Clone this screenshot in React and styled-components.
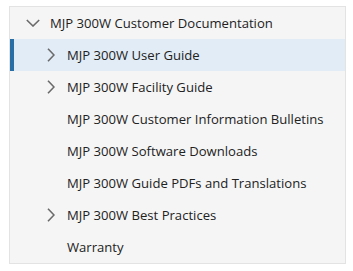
import React from "react";
import styled, { createGlobalStyle } from "styled-components";

const Global = createGlobalStyle`
  html, body { margin: 0; padding: 0; background: #fff; }
  body { font-family: "Open Sans", "Noto Sans", sans-serif; }
`;

const Page = styled.div`
  padding: 6px 7px 0 9px;
`;

const Panel = styled.ul`
  list-style: none;
  margin: 0;
  padding: 0;
  width: 335px;
  background: #f5f5f5;
  border: 1px solid #e3e3e3;
`;

const Row = styled.li`
  position: relative;
  display: flex;
  align-items: center;
  height: 32px;
  padding-left: ${(p) => p.$indent}px;
  background: ${(p) => (p.$active ? "#e1ecf6" : "transparent")};
  font-size: 13.1px;
  color: #222;
  white-space: nowrap;
  &::before {
    content: "";
    display: ${(p) => (p.$active ? "block" : "none")};
    position: absolute;
    left: 0;
    top: 0;
    bottom: 0;
    width: 4px;
    background: #2a6ea6;
  }
`;

const IconSlot = styled.span`
  display: flex;
  align-items: center;
  justify-content: flex-start;
  width: ${(p) => p.$w}px;
  flex: none;
`;

const Label = styled.span`
  line-height: 20px;
`;

const Down = () => (
  <svg width="14" height="8" viewBox="0 0 14 8">
    <path d="M0.8 1 L7 7 L13.2 1" fill="none" stroke="#6a6a6a" strokeWidth="1.6" />
  </svg>
);

const Right = () => (
  <svg width="8" height="14" viewBox="0 0 8 14">
    <path d="M1 0.8 L7 7 L1 13.2" fill="none" stroke="#6a6a6a" strokeWidth="1.6" />
  </svg>
);

const items = [
  { label: "MJP 300W User Guide", chevron: true, active: true },
  { label: "MJP 300W Facility Guide", chevron: true },
  { label: "MJP 300W Customer Information Bulletins" },
  { label: "MJP 300W Software Downloads" },
  { label: "MJP 300W Guide PDFs and Translations" },
  { label: "MJP 300W Best Practices", chevron: true },
  { label: "Warranty" },
];

export default function App() {
  return (
    <Page>
      <Global />
      <Panel>
        <Row $indent={16}>
          <IconSlot $w={24}>
            <Down />
          </IconSlot>
          <Label>MJP 300W Customer Documentation</Label>
        </Row>
        {items.map((it) => (
          <Row key={it.label} $indent={37} $active={it.active}>
            <IconSlot $w={20}>{it.chevron ? <Right /> : null}</IconSlot>
            <Label>{it.label}</Label>
          </Row>
        ))}
      </Panel>
    </Page>
  );
}
